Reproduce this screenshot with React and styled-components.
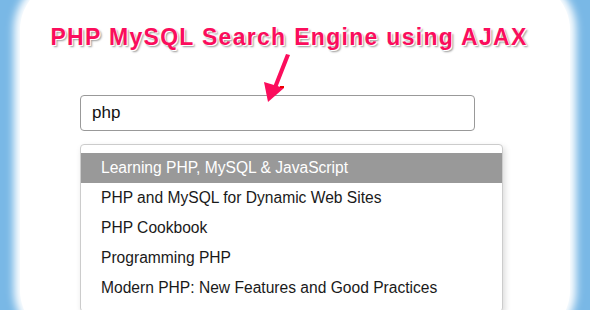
import React from 'react';
import styled, { createGlobalStyle } from 'styled-components';

const GlobalStyle = createGlobalStyle`
  html, body {
    margin: 0;
    padding: 0;
    background: #79b8e6;
    overflow: hidden;
  }
`;

const Page = styled.div`
  width: 590px;
  height: 310px;
  overflow: hidden;
  background: #79b8e6;
`;

const Panel = styled.div`
  margin: -20px 20px 0 20px;
  height: 360px;
  background: #fff;
  border-radius: 50px;
  box-shadow: 0 0 8px 6px #fff;
  padding-top: 44px;
  box-sizing: border-box;
  font-family: "Liberation Sans", Arial, sans-serif;
`;

const Title = styled.h1`
  margin: 0;
  padding-right: 12px;
  text-align: center;
  font-size: 23px;
  letter-spacing: 1.3px;
  font-weight: bold;
  color: #fb0d5c;
  line-height: 26px;
  text-shadow: 1px 1px 0 #fff, 2px 2px 2px #999;
`;

const ArrowWrap = styled.div`
  height: 45px;
  position: relative;
`;

const Field = styled.div`
  margin-left: 60px;
  width: 395px;
  height: 36px;
  box-sizing: border-box;
  border: 1px solid #999;
  border-radius: 4px;
  padding-left: 11px;
  font-size: 17px;
  line-height: 33px;
  color: #111;
  background: #fff;
`;

const List = styled.ul`
  list-style: none;
  margin: 13px 0 0 60px;
  width: 423px;
  box-sizing: border-box;
  padding: 8px 0;
  border: 1px solid #ccc;
  border-radius: 4px;
  background: #fff;
  box-shadow: 2px 3px 6px rgba(0, 0, 0, 0.15);
`;

const Item = styled.li`
  height: 30px;
  line-height: 30px;
  padding-left: 20px;
  font-size: 15.6px;
  color: ${p => (p.$active ? '#fff' : '#1a1a1a')};
  background: ${p => (p.$active ? '#999' : 'transparent')};
`;

const books = [
  'Learning PHP, MySQL & JavaScript',
  'PHP and MySQL for Dynamic Web Sites',
  'PHP Cookbook',
  'Programming PHP',
  'Modern PHP: New Features and Good Practices',
];

const Arrow = () => (
  <svg width="590" height="60" viewBox="0 0 590 60" style={{ position: 'absolute', left: -20, top: 0, zIndex: 2 }}>
    <polygon points="286,4 290,5 277,38 273,37" fill="#fb0d5c" />
    <polygon points="264,32 284,38 268,52" fill="#fb0d5c" />
    <rect x="280" y="36" width="4" height="2" fill="#e00" />
  </svg>
);

export default function App() {
  return (
    <Page>
      <GlobalStyle />
      <Panel>
        <Title>PHP MySQL Search Engine using AJAX</Title>
        <ArrowWrap>
          <Arrow />
        </ArrowWrap>
        <Field>php</Field>
        <List>
          {books.map((b, i) => (
            <Item key={b} $active={i === 0}>{b}</Item>
          ))}
        </List>
      </Panel>
    </Page>
  );
}
